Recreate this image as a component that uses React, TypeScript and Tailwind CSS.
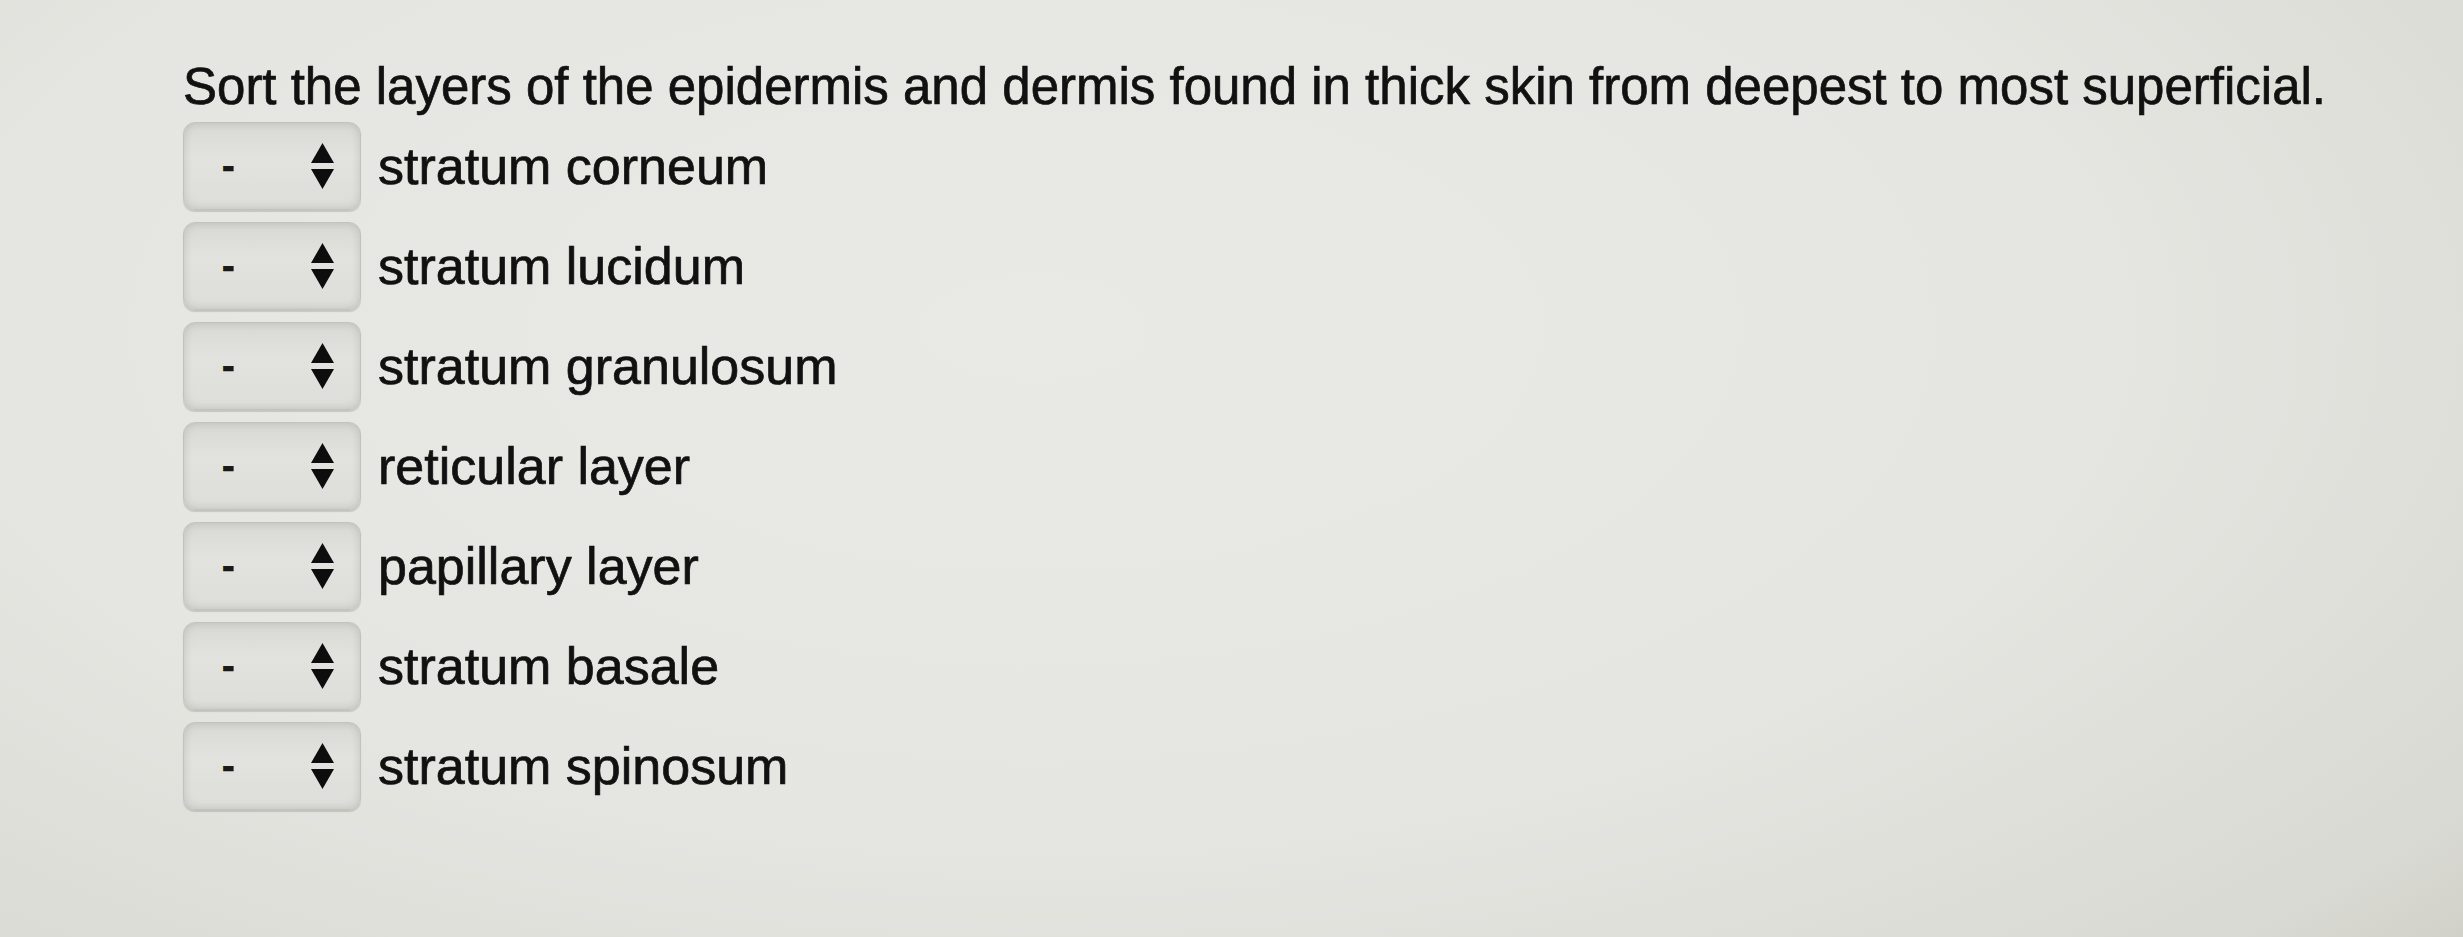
import React from "react";

const layers = [
  "stratum corneum",
  "stratum lucidum",
  "stratum granulosum",
  "reticular layer",
  "papillary layer",
  "stratum basale",
  "stratum spinosum",
];

const UpDown = () => (
  <svg width="23" height="46" viewBox="0 0 23 46" className="shrink-0">
    <path d="M11.5 0 L23 20 L0 20 Z" fill="#0d0d0d" />
    <path d="M0 26 L23 26 L11.5 46 Z" fill="#0d0d0d" />
  </svg>
);

const SortSelect = () => {
  return (
    <div className="flex h-[88px] w-[178px] shrink-0 items-center justify-between rounded-[12px] border border-[#c3c3be] bg-[linear-gradient(180deg,#d8d9d4_0%,#e2e3de_40%,#dddeda_100%)] pl-[38px] pr-[26px] shadow-[inset_0_0_10px_rgba(0,0,0,0.14),0_2px_1px_rgba(0,0,0,0.14)]">
      <span className="text-[38px] leading-none font-bold text-[#1a1a1a]">-</span>
      <UpDown />
    </div>
  );
};

const App = () => {
  return (
    <div className="min-h-screen w-full bg-[radial-gradient(ellipse_95%_120%_at_42%_35%,#e9eae5_0%,#e5e6e1_45%,#d9d9d3_75%,#bbbaaf_100%)] pl-[183px] pt-[57px] font-['Liberation_Sans',Arial,sans-serif] text-[#111] [-webkit-text-stroke:0.7px_#111]">
      <p className="whitespace-nowrap text-[51px] leading-[60px]">
        Sort the layers of the epidermis and dermis found in thick skin from
        deepest to most superficial.
      </p>
      <ul className="mt-[5px] flex flex-col gap-[12px]">
        {layers.map((name) => (
          <li key={name} className="flex items-center gap-[17px]">
            <SortSelect />
            <span className="whitespace-nowrap text-[52px] leading-[60px]">
              {name}
            </span>
          </li>
        ))}
      </ul>
    </div>
  );
};

export default App;
